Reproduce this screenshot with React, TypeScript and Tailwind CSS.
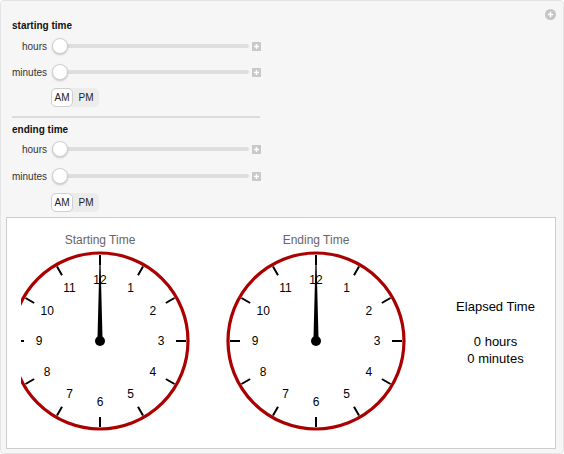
import React from "react";

const font = { fontFamily: '"Liberation Sans", Arial, Helvetica, sans-serif' };

function Slider({ label }: { label: string }) {
  return (
    <div className="flex items-center h-[20px]">
      <div className="w-[35px] text-right text-[10px] text-[#333]">{label}</div>
      <div className="relative ml-[5px] w-[197px] h-[20px] flex items-center">
        <div className="w-full h-[4px] rounded-full bg-[#dedede]" />
        <div className="absolute left-0 top-[2px] w-[16px] h-[16px] rounded-full bg-white border border-[#d0d0d0] shadow-[0_1px_2px_rgba(0,0,0,0.2)]" />
      </div>
      <div className="ml-[3px] w-[9px] h-[9px] bg-[#c9c9c9] flex items-center justify-center">
        <svg width="9" height="9" viewBox="0 0 9 9">
          <path d="M4.5 2 V7 M2 4.5 H7" stroke="white" strokeWidth="1.4" />
        </svg>
      </div>
    </div>
  );
}

function AmPm() {
  return (
    <div className="ml-[39px] flex w-[48px] h-[19px] rounded-[5px] bg-[#ececec] text-[10px] text-[#222]">
      <div className="w-[22px] flex items-center justify-center bg-white border border-[#cfcfcf] rounded-[5px]">AM</div>
      <div className="flex-1 flex items-center justify-center">PM</div>
    </div>
  );
}

function Clock({ clipLeft }: { clipLeft?: number }) {
  const cx = 93;
  const cy = 91;
  const id = clipLeft ? "clipA" : "clipB";
  const items = Array.from({ length: 12 }, (_, i) => i + 1);
  return (
    <svg width="186" height="184" viewBox="0 0 186 184">
      <defs>
        <clipPath id={id}>
          <rect x={clipLeft ?? 0} y="0" width="300" height="184" />
        </clipPath>
      </defs>
      <g clipPath={`url(#${id})`}>
        <circle cx={cx} cy={cy} r="88" fill="white" stroke="#aa0000" strokeWidth="3.2" />
        {items.map((h) => {
          const a = (h * 30 * Math.PI) / 180;
          const s = Math.sin(a);
          const c = Math.cos(a);
          return (
            <line
              key={"t" + h}
              x1={cx + 76 * s}
              y1={cy - 76 * c}
              x2={cx + 86 * s}
              y2={cy - 86 * c}
              stroke="black"
              strokeWidth="2"
            />
          );
        })}
        {items.map((h) => {
          const a = (h * 30 * Math.PI) / 180;
          return (
            <text
              key={"n" + h}
              x={cx + 61 * Math.sin(a)}
              y={cy - 61 * Math.cos(a) + 4.2}
              textAnchor="middle"
              fontSize="12"
              fill="#000"
              style={font}
            >
              {h}
            </text>
          );
        })}
        <polygon points={`${cx - 0.4},${cy - 84} ${cx + 0.4},${cy - 84} ${cx + 2.6},${cy} ${cx - 2.6},${cy}`} fill="black" />
        <circle cx={cx} cy={cy} r="5" fill="black" />
      </g>
    </svg>
  );
}

export default function App() {
  return (
    <div style={font} className="w-[564px] h-[454px] bg-[#f6f6f6] border border-[#e4e4e4] rounded-[4px] relative overflow-hidden">
      <div className="absolute right-[7px] top-[8px] w-[11px] h-[11px] rounded-full bg-[#c4c4c4] flex items-center justify-center">
        <svg width="11" height="11" viewBox="0 0 11 11">
          <path d="M5.5 2.8 V8.2 M2.8 5.5 H8.2" stroke="white" strokeWidth="1.6" />
        </svg>
      </div>
      <div className="pl-[11px] pt-[17px]">
        <div className="text-[10px] font-bold text-[#111] h-[16px] leading-[16px]">starting time</div>
        <div className="mt-[2px] flex flex-col gap-[6px]">
          <Slider label="hours" />
          <Slider label="minutes" />
        </div>
        <div className="mt-[6px]">
          <AmPm />
        </div>
        <div className="mt-[9px] w-[248px] h-[2px] bg-[#dcdcdc]" />
        <div className="mt-[4px] text-[10px] font-bold text-[#111] h-[16px] leading-[16px]">ending time</div>
        <div className="mt-[1px] flex flex-col gap-[7px]">
          <Slider label="hours" />
          <Slider label="minutes" />
        </div>
        <div className="mt-[7px]">
          <AmPm />
        </div>
      </div>
      <div className="mt-[5px] ml-[5px] w-[550px] h-[232px] bg-white border border-[#cdcdcd] flex">
        <div className="w-[186px] flex flex-col items-center pt-[14px]">
          <div className="h-[16px] leading-[16px] text-[12px] text-[#666]">Starting Time</div>
          <div className="mt-[2px]">
            <Clock clipLeft={14} />
          </div>
        </div>
        <div className="ml-[30px] w-[186px] flex flex-col items-center pt-[14px]">
          <div className="h-[16px] leading-[16px] text-[12px] text-[#666]">Ending Time</div>
          <div className="mt-[2px]">
            <Clock />
          </div>
        </div>
        <div className="ml-[27px] w-[144px] flex flex-col items-center pt-[80px] text-[13px] text-black">
          <div className="leading-[17px]">Elapsed Time</div>
          <div className="mt-[18px] leading-[17px]">0 hours</div>
          <div className="leading-[17px]">0 minutes</div>
        </div>
      </div>
    </div>
  );
}
